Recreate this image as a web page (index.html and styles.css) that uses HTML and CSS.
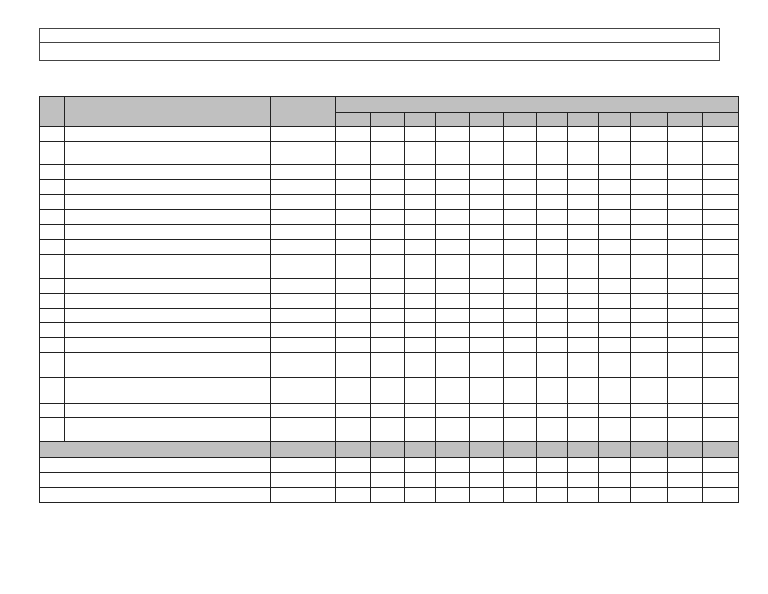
FILE: index.html
```html
<!DOCTYPE html>
<html>
<head>
<meta charset="utf-8">
<link rel="stylesheet" href="styles.css">
</head>
<body>
<div class="title-box">
  <div class="title-row r1"></div>
  <div class="title-row r2"></div>
</div>
<table class="sheet">
  <colgroup>
    <col class="c25"><col class="c206"><col class="c65">
    <col class="c35"><col class="c34"><col class="c31"><col class="c34"><col class="c34"><col class="c33">
    <col class="c31"><col class="c31"><col class="c32"><col class="c37"><col class="c35"><col class="c36">
  </colgroup>
  <thead>
    <tr class="h16">
      <td class="hd" rowspan="2"></td><td class="hd" rowspan="2"></td><td class="hd" rowspan="2"></td>
      <td class="hd" colspan="12"></td>
    </tr>
    <tr class="h14">
      <td class="hd"></td><td class="hd"></td><td class="hd"></td><td class="hd"></td><td class="hd"></td><td class="hd"></td>
      <td class="hd"></td><td class="hd"></td><td class="hd"></td><td class="hd"></td><td class="hd"></td><td class="hd"></td>
    </tr>
  </thead>
  <tbody>
    <tr class="h15"><td></td><td></td><td></td><td></td><td></td><td></td><td></td><td></td><td></td><td></td><td></td><td></td><td></td><td></td><td></td></tr>
    <tr class="h23"><td></td><td></td><td></td><td></td><td></td><td></td><td></td><td></td><td></td><td></td><td></td><td></td><td></td><td></td><td></td></tr>
    <tr class="h15"><td></td><td></td><td></td><td></td><td></td><td></td><td></td><td></td><td></td><td></td><td></td><td></td><td></td><td></td><td></td></tr>
    <tr class="h15"><td></td><td></td><td></td><td></td><td></td><td></td><td></td><td></td><td></td><td></td><td></td><td></td><td></td><td></td><td></td></tr>
    <tr class="h15"><td></td><td></td><td></td><td></td><td></td><td></td><td></td><td></td><td></td><td></td><td></td><td></td><td></td><td></td><td></td></tr>
    <tr class="h15"><td></td><td></td><td></td><td></td><td></td><td></td><td></td><td></td><td></td><td></td><td></td><td></td><td></td><td></td><td></td></tr>
    <tr class="h15"><td></td><td></td><td></td><td></td><td></td><td></td><td></td><td></td><td></td><td></td><td></td><td></td><td></td><td></td><td></td></tr>
    <tr class="h15"><td></td><td></td><td></td><td></td><td></td><td></td><td></td><td></td><td></td><td></td><td></td><td></td><td></td><td></td><td></td></tr>
    <tr class="h24"><td></td><td></td><td></td><td></td><td></td><td></td><td></td><td></td><td></td><td></td><td></td><td></td><td></td><td></td><td></td></tr>
    <tr class="h15"><td></td><td></td><td></td><td></td><td></td><td></td><td></td><td></td><td></td><td></td><td></td><td></td><td></td><td></td><td></td></tr>
    <tr class="h15"><td></td><td></td><td></td><td></td><td></td><td></td><td></td><td></td><td></td><td></td><td></td><td></td><td></td><td></td><td></td></tr>
    <tr class="h14"><td></td><td></td><td></td><td></td><td></td><td></td><td></td><td></td><td></td><td></td><td></td><td></td><td></td><td></td><td></td></tr>
    <tr class="h15"><td></td><td></td><td></td><td></td><td></td><td></td><td></td><td></td><td></td><td></td><td></td><td></td><td></td><td></td><td></td></tr>
    <tr class="h15"><td></td><td></td><td></td><td></td><td></td><td></td><td></td><td></td><td></td><td></td><td></td><td></td><td></td><td></td><td></td></tr>
    <tr class="h25"><td></td><td></td><td></td><td></td><td></td><td></td><td></td><td></td><td></td><td></td><td></td><td></td><td></td><td></td><td></td></tr>
    <tr class="h26"><td></td><td></td><td></td><td></td><td></td><td></td><td></td><td></td><td></td><td></td><td></td><td></td><td></td><td></td><td></td></tr>
    <tr class="h14"><td></td><td></td><td></td><td></td><td></td><td></td><td></td><td></td><td></td><td></td><td></td><td></td><td></td><td></td><td></td></tr>
    <tr class="h24"><td></td><td></td><td></td><td></td><td></td><td></td><td></td><td></td><td></td><td></td><td></td><td></td><td></td><td></td><td></td></tr>
    <tr class="h16"><td class="hd" colspan="2"></td><td class="hd"></td><td class="hd"></td><td class="hd"></td><td class="hd"></td><td class="hd"></td><td class="hd"></td><td class="hd"></td><td class="hd"></td><td class="hd"></td><td class="hd"></td><td class="hd"></td><td class="hd"></td><td class="hd"></td></tr>
    <tr class="h15"><td colspan="2"></td><td></td><td></td><td></td><td></td><td></td><td></td><td></td><td></td><td></td><td></td><td></td><td></td><td></td></tr>
    <tr class="h15"><td colspan="2"></td><td></td><td></td><td></td><td></td><td></td><td></td><td></td><td></td><td></td><td></td><td></td><td></td><td></td></tr>
    <tr class="h15"><td colspan="2"></td><td></td><td></td><td></td><td></td><td></td><td></td><td></td><td></td><td></td><td></td><td></td><td></td><td></td></tr>
  </tbody>
</table>
</body>
</html>
```
FILE: styles.css
```css
html, body {
  margin: 0;
  padding: 0;
  background: #fff;
  font-family: "Liberation Sans", Arial, sans-serif;
}
.title-box {
  margin: 28px 0 0 39px;
  width: 681px;
  box-sizing: border-box;
  border: 1px solid #444;
}
.title-row.r1 {
  height: 13px;
  border-bottom: 1px solid #444;
}
.title-row.r2 {
  height: 17px;
}
.sheet {
  margin: 35px 0 0 39px;
  width: 700px;
  table-layout: fixed;
  border-collapse: separate;
  border-spacing: 0;
  border-top: 1px solid #222;
  border-left: 1px solid #222;
}
.sheet td {
  box-sizing: border-box;
  padding: 0;
  font-size: 0;
  line-height: 0;
  border-right: 1px solid #222;
  border-bottom: 1px solid #222;
}
.sheet td.hd { background: #c0c0c0; }
.c25 { width: 25px; } .c206 { width: 206px; } .c65 { width: 65px; }
.c31 { width: 31px; } .c32 { width: 32px; } .c33 { width: 33px; }
.c34 { width: 34px; } .c35 { width: 35px; } .c36 { width: 36px; } .c37 { width: 37px; }
.h14 > td { height: 14px; }
.h15 > td { height: 15px; }
.h16 > td { height: 16px; }
.h23 > td { height: 23px; }
.h24 > td { height: 24px; }
.h25 > td { height: 25px; }
.h26 > td { height: 26px; }
```
